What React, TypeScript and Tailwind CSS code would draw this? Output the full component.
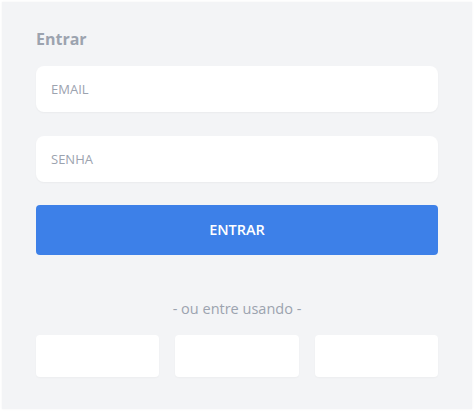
import React from 'react';

export default function App() {
  return (
    <div className="min-h-screen bg-white p-[2px]" style={{ fontFamily: '"Open Sans", "Noto Sans", sans-serif' }}>
      <div className="h-[407px] bg-[#f3f4f6] px-[34px] pt-[23px] shadow-[0_0_2px_rgba(0,0,0,0.06)]">
        <h2 className="text-base leading-7 font-bold text-[#9ca3af]">Entrar</h2>

        <form className="mt-[13px] flex flex-col" onSubmit={(e) => e.preventDefault()}>
          <input
            type="email"
            placeholder="EMAIL"
            className="h-[46px] w-full rounded-lg bg-white px-[15px] text-[13px] text-gray-600 placeholder:text-[#9ca3af] shadow-[0_1px_2px_rgba(0,0,0,0.04)] outline-none"
          />
          <input
            type="password"
            placeholder="SENHA"
            className="mt-6 h-[46px] w-full rounded-lg bg-white px-[15px] text-[13px] text-gray-600 placeholder:text-[#9ca3af] shadow-[0_1px_2px_rgba(0,0,0,0.04)] outline-none"
          />
          <button
            type="submit"
            className="mt-[23px] h-[50px] w-full rounded bg-[#3d80e8] text-[14.5px] font-semibold text-white"
          >
            ENTRAR
          </button>
        </form>

        <p className="mt-[42px] text-center text-[14.5px] leading-6 text-[#9ca3af]">- ou entre usando -</p>

        <div className="mt-[14px] grid grid-cols-3 gap-4">
          <button className="h-[42px] rounded bg-white shadow-[0_1px_2px_rgba(0,0,0,0.03)]" />
          <button className="h-[42px] rounded bg-white shadow-[0_1px_2px_rgba(0,0,0,0.03)]" />
          <button className="h-[42px] rounded bg-white shadow-[0_1px_2px_rgba(0,0,0,0.03)]" />
        </div>
      </div>
    </div>
  );
}
